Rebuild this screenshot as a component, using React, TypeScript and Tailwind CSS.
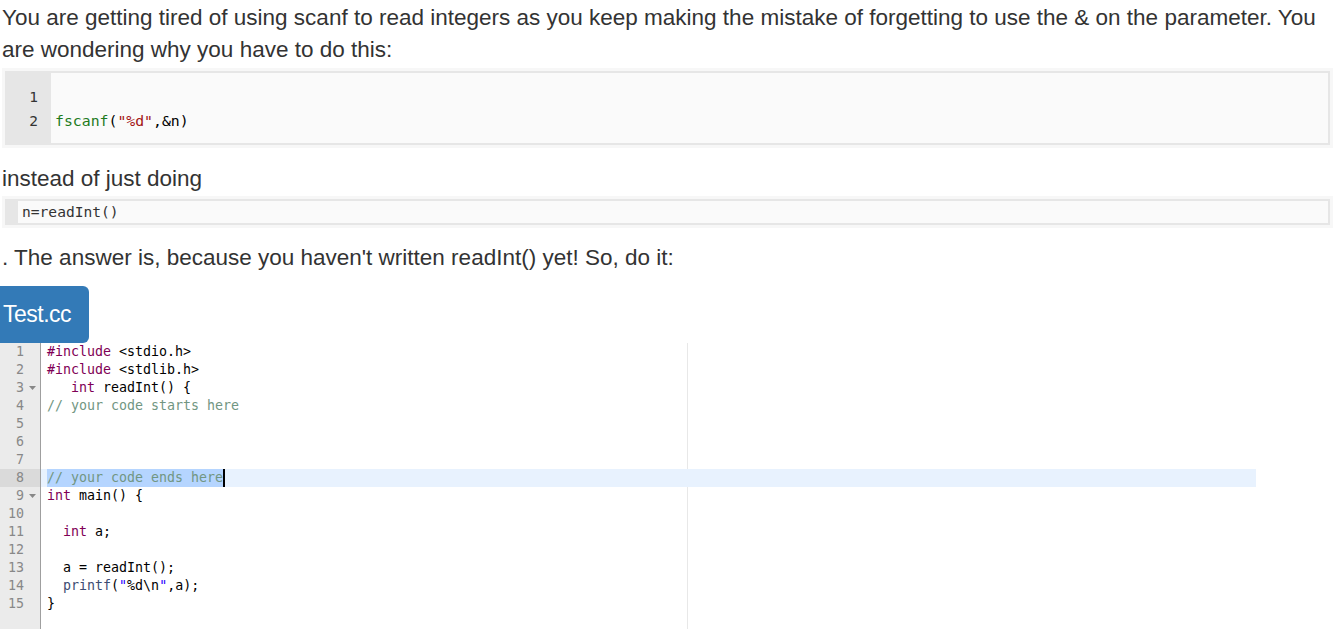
import React from 'react';

type Tok = { t: string; c?: string };

const KW = 'text-[#7f0055]';
const CM = 'text-[#719682]';
const FN = 'text-[#3c4c72]';
const STR = 'text-[#2a00ff]';

const lines: { toks: Tok[]; fold?: boolean; active?: boolean }[] = [
  { toks: [{ t: '#include', c: KW }, { t: ' <stdio.h>' }] },
  { toks: [{ t: '#include', c: KW }, { t: ' <stdlib.h>' }] },
  { toks: [{ t: '   ' }, { t: 'int', c: KW }, { t: ' readInt() {' }], fold: true },
  { toks: [{ t: '// your code starts here', c: CM }] },
  { toks: [] },
  { toks: [] },
  { toks: [] },
  { toks: [{ t: '// your code ends here', c: CM }], active: true },
  { toks: [{ t: 'int', c: KW }, { t: ' main() {' }], fold: true },
  { toks: [] },
  { toks: [{ t: '  ' }, { t: 'int', c: KW }, { t: ' a;' }] },
  { toks: [] },
  { toks: [{ t: '  a = readInt();' }] },
  {
    toks: [
      { t: '  ' },
      { t: 'printf', c: FN },
      { t: '(' },
      { t: '"', c: STR },
      { t: '%d\\n' },
      { t: '"', c: STR },
      { t: ',a);' },
    ],
  },
  { toks: [{ t: '}' }] },
];

const mono = "font-['DejaVu_Sans_Mono',monospace]";

const FoldArrow = () => (
  <svg width="7" height="4" viewBox="0 0 7 4" className="block">
    <path d="M0 0 L7 0 L3.5 4 Z" fill="#888" />
  </svg>
);

const Editor = () => (
  <div className={`relative flex w-[1256px] h-[300px] bg-white ${mono} text-[13.3px] leading-[18px]`}>
    {/* gutter */}
    <div className="w-[41px] shrink-0 bg-[#ebebeb] border-r border-[#9f9f9f] text-[#888]">
      {lines.map((l, i) => (
        <div key={i} className={`flex h-[18px] ${l.active ? 'bg-[#dadada]' : ''}`}>
          <span className="w-[24px] text-right">{i + 1}</span>
          <span className="w-[16px] flex items-center justify-center">{l.fold && <FoldArrow />}</span>
        </div>
      ))}
    </div>
    {/* print margin */}
    <div className="absolute left-[687px] top-0 bottom-0 w-px bg-[#e8e8e8]" />
    {/* code */}
    <div className="relative flex-1 text-black">
      {lines.map((l, i) => (
        <div key={i} className={`h-[18px] pl-[6px] whitespace-pre ${l.active ? 'bg-[#e8f2fe]' : ''}`}>
          {l.active ? (
            <span className="inline-flex items-stretch h-[18px]">
              <span className="bg-[#b5d5ff]">
                {l.toks.map((tk, j) => (
                  <span key={j} className={tk.c}>{tk.t}</span>
                ))}
              </span>
              <span className="w-[2px] bg-black" />
            </span>
          ) : (
            l.toks.map((tk, j) => (
              <span key={j} className={tk.c}>{tk.t}</span>
            ))
          )}
        </div>
      ))}
    </div>
  </div>
);

export default function App() {
  return (
    <div className="h-screen overflow-hidden bg-white text-[#333] font-['Liberation_Sans',Arial,sans-serif]">
      <p className="px-[2px] pt-[2px] text-[22.5px] leading-[32px]">
        You are getting tired of using scanf to read integers as you keep making the mistake of forgetting to use the &amp; on the parameter. You are wondering why you have to do this:
      </p>

      <div className="mt-[2px] ml-[2px] w-[1331px] p-[3px] bg-[#f7f7f7]">
        <div className="flex border-2 border-[#e6e6e6] bg-[#fafafa]">
          <div className={`w-[44px] bg-[#e6e6e6] pt-[12px] pb-[10px] text-[14.5px] leading-[24px] text-[#333] ${mono}`}>
            <div className="pr-[13px] text-right">1</div>
            <div className="pr-[13px] text-right">2</div>
          </div>
          <div className={`pl-[4px] pt-[12px] pb-[10px] text-[14.8px] leading-[24px] ${mono}`}>
            <div>&nbsp;</div>
            <div className="whitespace-pre text-black">
              <span className="text-[#1e7b1e]">fscanf</span>(<span className="text-[#a31515]">"%d"</span>,&amp;n)
            </div>
          </div>
        </div>
      </div>

      <p className="mt-[15px] px-[2px] text-[22.5px] leading-[32px]">instead of just doing</p>

      <div className="mt-[1px] ml-[2px] w-[1331px] p-[3px] bg-[#f7f7f7]">
        <div className="flex border-2 border-[#e6e6e6] bg-[#fafafa]">
          <div className="w-[11px] bg-[#e6e6e6]" />
          <div className={`pl-[4px] h-[22px] text-[14.6px] leading-[22px] text-[#333] ${mono}`}>n=readInt()</div>
        </div>
      </div>

      <p className="mt-[14px] px-[2px] text-[22.5px] leading-[32px]">
        . The answer is, because you haven't written readInt() yet! So, do it:
      </p>

      <div className="mt-[12px] flex h-[57px] w-[89px] items-center rounded-r-[6px] bg-[#337ab7] pl-[3px] text-[23px] tracking-[-0.5px] text-white">
        Test.cc
      </div>

      <Editor />
    </div>
  );
}
